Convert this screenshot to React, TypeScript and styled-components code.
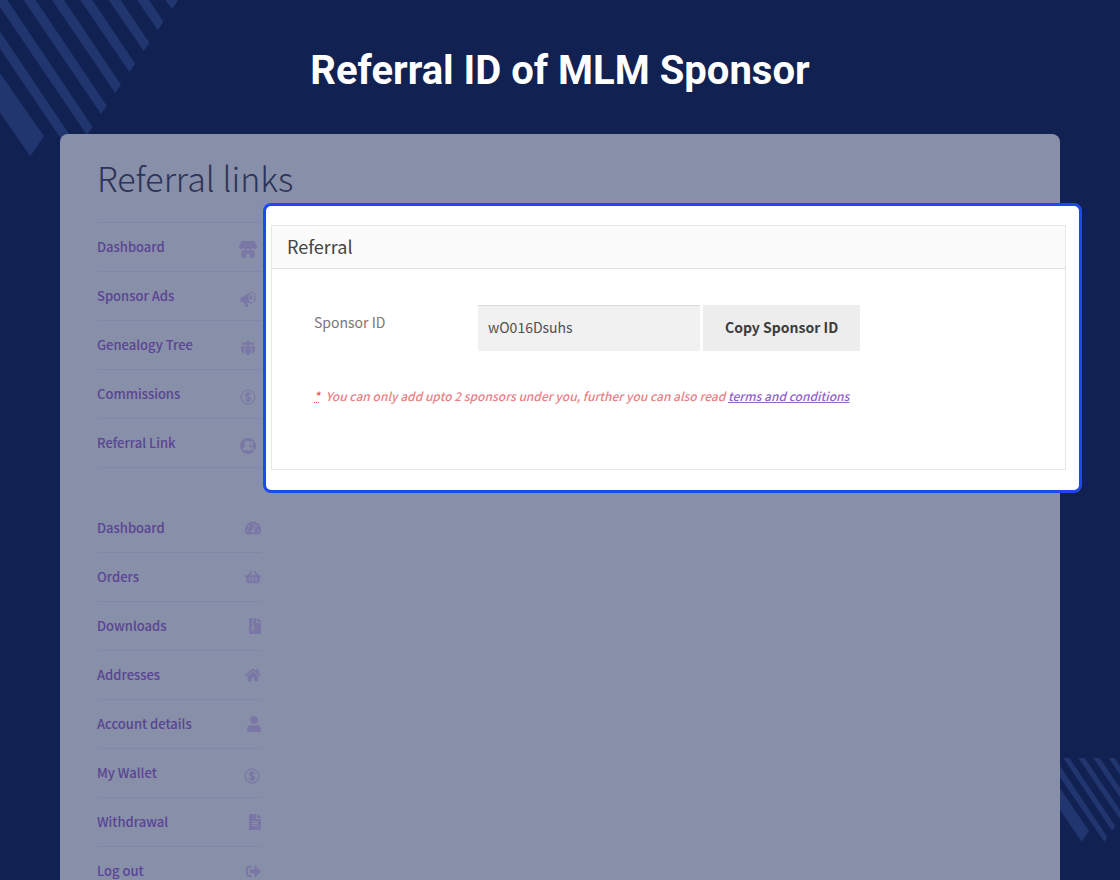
import React from 'react';
import styled, { createGlobalStyle } from 'styled-components';
import { FaTachometerAlt, FaShoppingBasket, FaFileArchive, FaHome, FaUser, FaFileAlt, FaSignOutAlt } from 'react-icons/fa';

const sans = '"Noto Sans CJK SC", "Noto Sans", sans-serif';

const GlobalStyle = createGlobalStyle`
  *, *::before, *::after { box-sizing: border-box; }
  body { margin: 0; background: #112151; font-family: ${sans}; }
`;

const Page = styled.main`
  position: relative;
  display: flex;
  flex-direction: column;
  min-height: 100vh;
  overflow: hidden;
  background: #112151;
`;

const CornerStripes = styled.svg`
  position: absolute;
  top: 0;
  left: 0;
  fill: #21366f;
`;

const EdgeStripes = styled.svg`
  position: absolute;
  right: 0;
  bottom: 38px;
  fill: #21366f;
`;

const Title = styled.h1`
  position: relative;
  margin: 0;
  padding: 47px 24px 39px;
  color: #fff;
  font: 700 40px/48px Roboto, sans-serif;
  text-align: center;
`;

const Panel = styled.section`
  position: relative;
  flex: 1;
  margin: 0 60px;
  padding: 22px 0 0 37px;
  border-radius: 8px 8px 0 0;
  background: #888fa8;
`;

const PanelTitle = styled.h2`
  margin: 0;
  padding-bottom: 3px;
  color: #2c3357;
  font-size: 34px;
  font-weight: 300;
  line-height: 44px;
`;

const Columns = styled.div`
  display: flex;
  align-items: flex-start;
`;

const Sidebar = styled.aside`
  flex: none;
  display: flex;
  flex-direction: column;
  gap: 36px;
  width: 166px;
  padding: 19px 2px 0 0;
`;

const Menu = styled.ul<{ $ruled?: boolean }>`
  margin: 0;
  padding: 0;
  list-style: none;
  border-top: ${p => (p.$ruled ? '1px solid #8187a6' : '0')};
`;

const MenuItem = styled.li<{ $end?: boolean }>`
  border-bottom: ${p => (p.$end ? '0' : '1px solid #8187a6')};
`;

const MenuLink = styled.a<{ $end?: boolean }>`
  display: flex;
  justify-content: space-between;
  align-items: center;
  padding: ${p => (p.$end ? '15px 0 0' : '15px 0')};
  color: #5a4494;
  font-size: 13px;
  font-weight: 500;
  line-height: 18px;
  text-decoration: none;
`;

const IconSlot = styled.span<{ $badge?: boolean; $inset?: boolean }>`
  display: flex;
  align-items: center;
  justify-content: ${p => (p.$badge ? 'center' : 'flex-end')};
  width: 18px;
  height: 18px;
  margin-right: ${p => (p.$inset ? '4px' : '0')};
  padding-top: ${p => (p.$badge ? '6px' : '0')};
  color: #7a76a5;
  svg { flex: none; }
`;

const Archive = styled(FaFileArchive)`
  width: 12px;
  height: 16px;
`;
const Document = styled(FaFileAlt)`
  width: 12px;
  height: 16px;
`;
const Person = styled(FaUser)`
  width: 14px;
  height: 16px;
`;

const Spotlight = styled.section`
  flex: 1;
  min-width: 0;
  margin-right: -22px;
  padding: 19px 13px 20px 5px;
  border: 3px solid #1f47f5;
  border-radius: 8px;
  background: #fff;
`;

const Card = styled.div`
  border: 1px solid #e3e6ea;
`;

const CardHeader = styled.h3`
  margin: 0;
  padding: 7px 15px 9px;
  border-bottom: 1px solid #dcdfe3;
  background: #fbfbfb;
  color: #444;
  font-size: 18px;
  font-weight: 400;
  line-height: 26px;
`;

const CardBody = styled.form`
  display: flex;
  flex-direction: column;
  gap: 35px;
  padding: 36px 42px 63px;
`;

const Field = styled.div`
  display: flex;
  align-items: flex-start;
`;

const Label = styled.label`
  width: 164px;
  padding-top: 7px;
  color: #777;
  font-size: 14px;
  line-height: 20px;
`;

const IdInput = styled.input`
  width: 222px;
  height: 46px;
  margin-right: 3px;
  padding: 0 10px 3px;
  border: 0;
  border-top: 1px solid #d8dadb;
  border-radius: 0;
  background: #f1f1f1;
  color: #505050;
  font: 400 14px ${sans};
`;

const CopyButton = styled.button`
  height: 46px;
  padding: 0 22px 2px;
  border: 0;
  background: #ededed;
  color: #3c3c3c;
  font: 700 14px ${sans};
`;

const Note = styled.p`
  margin: 0;
  color: #ea7f88;
  font-size: 12px;
  font-style: italic;
  font-weight: 500;
  line-height: 20px;
`;

const Required = styled.abbr`
  margin-right: 6px;
  color: #e8524f;
  text-decoration: underline dotted;
`;

const TermsLink = styled.a`
  color: #9164c6;
`;

const Store = () => (
  <svg width="18" height="18" viewBox="0 0 18 18" fill="currentColor">
    <path d="M3 0h12l3 5.500c0 3-3 3.400-4.500 1.500-1.200 1.600-3.300 1.600-4.500 0-1.200 1.600-3.300 1.600-4.500 0C3 8.900 0 8.500 0 5.500z" />
    <path d="M2.500 9.500q2 .4 3.500-1 1.500 1.400 3 .2 1.500 1.200 3-.2 1.500 1.400 3.500 1V17H11v-4H7v4H2.500z" />
  </svg>
);
const Megaphone = () => (
  <svg width="16" height="17" viewBox="0 0 16 17" fill="currentColor">
    <path d="M9.500 1C7 4 4 5 2 6c-2.500 1-2.300 4.500 0 5.300l2 .2L5.500 16h3L7 11.500c2 .1 3 .9 4 1.200C9 10 8 5 9.500 1z" />
    <ellipse cx="11.600" cy="6.500" rx="3.600" ry="5.500" fill="#888fa8" stroke="currentColor" />
    <ellipse cx="11" cy="6.500" rx="1.400" ry="2.300" />
  </svg>
);
const People = () => (
  <svg width="16" height="16" viewBox="0 0 16 16" fill="currentColor">
    <circle cx="8" cy="3.200" r="2.200" />
    <circle cx="4" cy="3.500" r="1.600" />
    <circle cx="12" cy="3.500" r="1.600" />
    <path d="M5.300 6.300h5.400v6L9.500 15h-3l-1.200-2.700zM1 6h3.300v8C2 13 1 10 1 6zM15 6h-3.300v8C14 13 15 10 15 6z" />
  </svg>
);
const Coin = ({ weight = 1 }: { weight?: number }) => (
  <svg width="16" height="16" viewBox="0 0 16 16" fill="none" stroke="currentColor" strokeWidth={weight}>
    <circle cx="8" cy="8" r="6.900" />
    <path d="M10.500 5.700C10 4 6 4 5.800 6S10.400 7.800 10.400 10 6 12 5.500 10.300M8 3v10" strokeWidth={weight + 0.4} />
  </svg>
);
const Contacts = () => (
  <svg width="18" height="18" viewBox="0 0 18 18">
    <circle cx="9" cy="9" r="8" fill="currentColor" />
    <circle cx="11.800" cy="6.300" r="2.500" fill="#888fa8" />
    <path d="M11 9.500c3-.5 4.500 1.500 4.500 4H11z" fill="#888fa8" />
    <path d="M3 13.700c0-2.700 1.500-4 3.200-4.500a3.300 3.300 0 1 1 4 0c1.800.5 3.300 1.800 3.300 4.500z" fill="#888fa8" stroke="currentColor" strokeWidth=".8" />
  </svg>
);

type Item = { label: string; icon: React.ReactNode; badge?: boolean; inset?: boolean };

const networkMenu: Item[] = [
  { label: 'Dashboard', icon: <Store />, badge: true, inset: true },
  { label: 'Sponsor Ads', icon: <Megaphone />, badge: true, inset: true },
  { label: 'Genealogy Tree', icon: <People />, badge: true, inset: true },
  { label: 'Commissions', icon: <Coin />, badge: true, inset: true },
  { label: 'Referral Link', icon: <Contacts />, badge: true, inset: true },
];

const accountMenu: Item[] = [
  { label: 'Dashboard', icon: <FaTachometerAlt size={16} /> },
  { label: 'Orders', icon: <FaShoppingBasket size={16} /> },
  { label: 'Downloads', icon: <Archive /> },
  { label: 'Addresses', icon: <FaHome size={16} /> },
  { label: 'Account details', icon: <Person /> },
  { label: 'My Wallet', icon: <Coin weight={1.4} />, badge: true },
  { label: 'Withdrawal', icon: <Document /> },
  { label: 'Log out', icon: <FaSignOutAlt size={15} /> },
];

const MenuList = ({ items, ruled, open }: { items: Item[]; ruled?: boolean; open?: boolean }) => (
  <Menu $ruled={ruled}>
    {items.map((item, i) => {
      const end = open && i === items.length - 1;
      return (
        <MenuItem key={item.label} $end={end}>
          <MenuLink href="#" $end={end}>
            {item.label}
            <IconSlot $badge={item.badge} $inset={item.inset}>{item.icon}</IconSlot>
          </MenuLink>
        </MenuItem>
      );
    })}
  </Menu>
);

const stripes = Array.from({ length: 8 }, (_, k) => {
  const x = 85 * (k - 1);
  const tipX = 218 + 42.6 * k;
  const tipY = 468 - 63 * k;
  return `${x - 14},0 ${x + 22},0 ${tipX + 17},${tipY - 25} ${tipX},${tipY}`;
});

export default function App() {
  return (
    <>
      <GlobalStyle />
      <Page>
        <CornerStripes width="180" height="157" viewBox="0 0 540 471" aria-hidden="true">
          <polygon points="0,219 132,409 91,469 0,338" />
          {stripes.map(points => <polygon key={points} points={points} />)}
        </CornerStripes>
        <EdgeStripes width="60" height="84" viewBox="0 0 180 252" aria-hidden="true">
          <polygon points="0,91 87,218 65,251 0,155" />
          <polygon points="0,24 142,237 133,251 0,58" />
          <polygon points="10,0 28,0 166,204 156,218" />
          <polygon points="55,0 74,0 180,157 180,184" />
          <polygon points="100,0 119,0 180,90 180,118" />
          <polygon points="146,0 164,0 180,24 180,50" />
        </EdgeStripes>
        <Title>Referral ID of MLM Sponsor</Title>
        <Panel>
          <PanelTitle>Referral links</PanelTitle>
          <Columns>
            <Sidebar>
              <MenuList items={networkMenu} ruled />
              <MenuList items={accountMenu} open />
            </Sidebar>
            <Spotlight>
              <Card>
                <CardHeader>Referral</CardHeader>
                <CardBody onSubmit={e => e.preventDefault()}>
                  <Field>
                    <Label htmlFor="sponsor-id">Sponsor ID</Label>
                    <IdInput id="sponsor-id" readOnly value="wO016Dsuhs" />
                    <CopyButton type="button">Copy Sponsor ID</CopyButton>
                  </Field>
                  <Note>
                    <Required title="required">*</Required>
                    You can only add upto 2 sponsors under you, further you can also read{' '}
                    <TermsLink href="#">terms and conditions</TermsLink>
                  </Note>
                </CardBody>
              </Card>
            </Spotlight>
          </Columns>
        </Panel>
      </Page>
    </>
  );
}
